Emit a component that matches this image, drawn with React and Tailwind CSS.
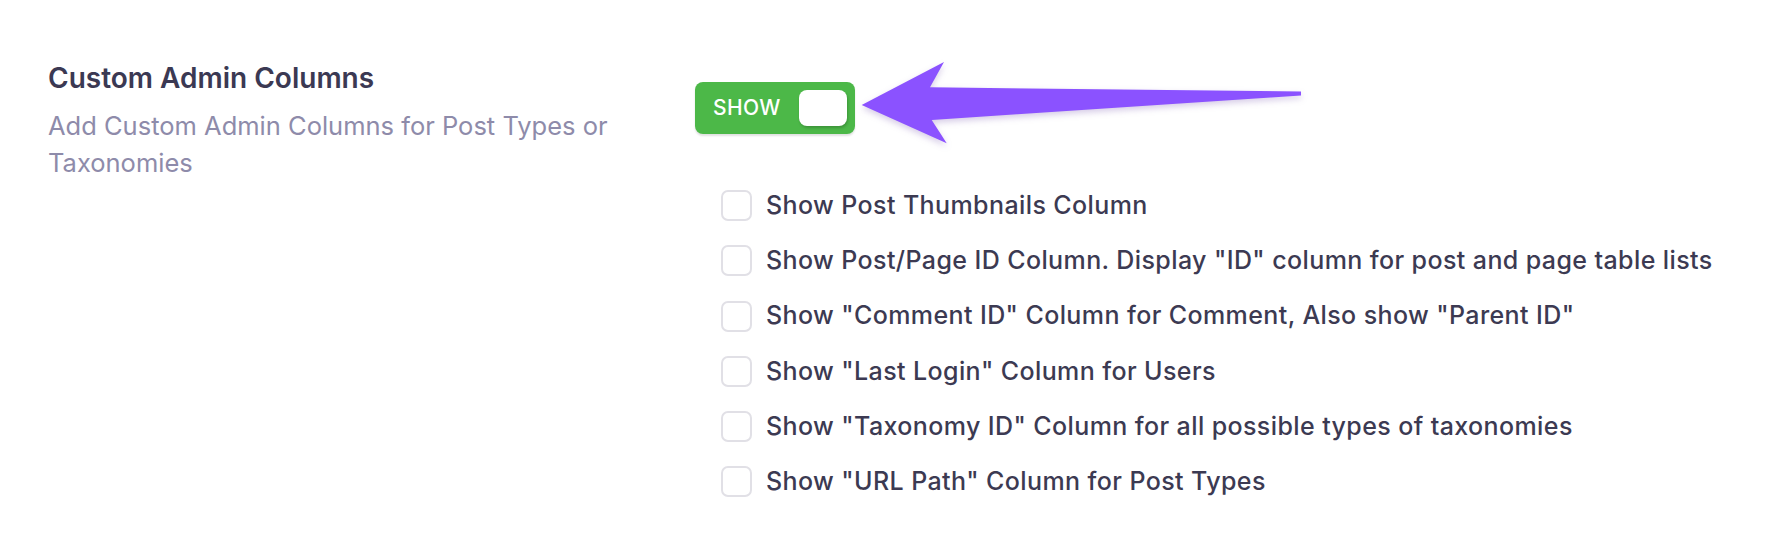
import React from "react";

const options = [
  "Show Post Thumbnails Column",
  'Show Post/Page ID Column. Display "ID" column for post and page table lists',
  'Show "Comment ID" Column for Comment, Also show "Parent ID"',
  'Show "Last Login" Column for Users',
  'Show "Taxonomy ID" Column for all possible types of taxonomies',
  'Show "URL Path" Column for Post Types',
];

const Arrow = () => (
  <svg
    className="absolute left-full top-[-24px] drop-shadow-[0_3px_3px_rgba(90,50,160,0.25)]"
    width="450"
    height="92"
    viewBox="0 0 450 92"
  >
    <polygon
      points="6.7,47 89,4 75,29.3 446,33.5 446,37.5 76.7,62 91.7,85.3"
      fill="#8B52FF"
    />
  </svg>
);

const Toggle = () => (
  <div className="relative w-[160px]">
    <div className="flex h-[52px] w-[160px] items-center justify-between rounded-[8px] bg-[#4CB848] pl-[18px] pr-[8px] shadow-[0_2px_2px_rgba(0,0,0,0.12)]">
      <span className="text-[21px] font-medium tracking-[0.4px] text-white">SHOW</span>
      <span className="h-[36px] w-[48px] rounded-[8px] bg-white shadow-[1px_2px_3px_rgba(0,0,0,0.2)]" />
    </div>
    <Arrow />
  </div>
);

export default function App() {
  return (
    <div className="min-h-[542px] w-full bg-white font-['Inter',sans-serif]">
      <div className="flex pl-[48px] pt-[56px]">
        <div className="w-[647px] pt-[4px]">
          <h2 className="text-[28px] leading-[36px] font-semibold text-[#3B3953]">
            Custom Admin Columns
          </h2>
          <p className="mt-[11px] w-[610px] text-[25.5px] leading-[37px] text-[#8E8BAA]">
            Add Custom Admin Columns for Post Types or Taxonomies
          </p>
        </div>
        <div className="pt-[26px]">
          <Toggle />
          <ul className="mt-[56px] flex flex-col gap-[24.3px] pl-[26px]">
            {options.map((label) => (
              <li key={label} className="flex h-[31px] items-center gap-[14px]">
                <span className="h-[31px] w-[31px] shrink-0 rounded-[7px] border-2 border-[#E1E0E6] bg-white" />
                <span className="whitespace-nowrap text-[25px] font-medium tracking-[0.4px] text-[#3C3A52]">
                  {label}
                </span>
              </li>
            ))}
          </ul>
        </div>
      </div>
    </div>
  );
}
